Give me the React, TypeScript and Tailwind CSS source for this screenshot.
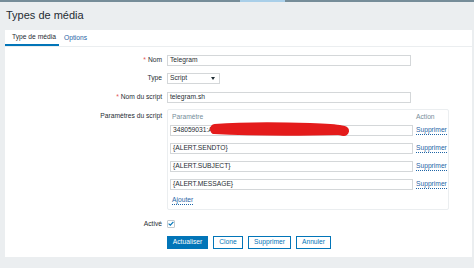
import { useState } from 'react';

const params = ['348059031:A', '{ALERT.SENDTO}', '{ALERT.SUBJECT}', '{ALERT.MESSAGE}'];

const Label = ({ text, required }: { text: string; required?: boolean }) => (
  <div className="flex items-center justify-end whitespace-nowrap">
    {required && <span className="mr-[2px] text-[#e45959]">*</span>}
    {text}
  </div>
);

const TextInput = ({ value, width }: { value: string; width: string }) => (
  <div className={`flex h-[11px] items-center border border-[#d4d7d9] bg-white pl-[2px] ${width}`}>
    {value}
  </div>
);

const Redaction = () => (
  <svg
    className="pointer-events-none absolute left-[40px] top-[-4px]"
    width="140"
    height="20"
    viewBox="0 0 140 20"
  >
    <path
      d="M5 8 C 30 6, 70 6, 100 7 S 128 9, 134 10"
      fill="none"
      stroke="#e41b1b"
      strokeWidth="10"
      strokeLinecap="round"
    />
    <path d="M4 10 C 40 12, 90 12, 132 11" fill="none" stroke="#e41b1b" strokeWidth="6" strokeLinecap="round" />
  </svg>
);

const App = () => {
  const [active, setActive] = useState(true);

  return (
    <div className="h-[268px] w-[474px] overflow-hidden bg-[#ebeef0] font-['Liberation_Sans',Arial,sans-serif] text-[6.7px] text-[#1f2c33]">
      <div className="flex h-[2px] bg-[#768d99]">
        <div className="w-[240px]" />
        <div className="w-[45px] bg-[#a9cfe9]" />
      </div>
      <div className="flex h-[26px] items-center pl-[6px] text-[11px] text-[#1f2c33]">Types de média</div>
      <div className="h-[2px]" />

      <div className="ml-[5px] mr-[2px] h-[227px] bg-white">
        <div className="flex h-[17px] border-b border-[#ebeef0]">
          <div className="flex w-[54px] items-center border-b-2 border-[#0275b8] pl-[7px] pt-[1px]">Type de média</div>
          <div className="ml-[5px] flex items-center pt-[1px] text-[#1f65a6]">Options</div>
        </div>

        <div className="grid grid-cols-[157px_1fr] gap-x-[5px]">
          <div className="col-span-2 h-[8px]" />
          <Label text="Nom" required />
          <TextInput value="Telegram" width="w-[244px]" />
          <div className="col-span-2 h-[7px]" />
          <Label text="Type" />
          <div className="flex h-[11px] w-[53px] items-center justify-between border border-[#d4d7d9] bg-white pl-[2px] pr-[4px]">
            Script
            <svg width="4" height="3" viewBox="0 0 4 3">
              <path d="M0 0 H4 L2 3 Z" fill="#1f2c33" />
            </svg>
          </div>
          <div className="col-span-2 h-[8px]" />
          <Label text="Nom du script" required />
          <TextInput value="telegram.sh" width="w-[244px]" />
          <div className="col-span-2 h-[6px]" />

          <div className="flex h-[13px] items-center justify-end pt-[1px]">Paramètres du script</div>
          <div className="h-[101px] w-[282px] rounded-[2px] border border-[#ebeef0] pl-[2px]">
            <div className="flex h-[12px] items-end text-[#768d99]">
              <div className="w-[246px] pl-[2px]">Paramètre</div>
              <div>Action</div>
            </div>
            <div className="mt-[3px] flex flex-col gap-[7px]">
              {params.map((p, i) => (
                <div key={p} className="flex items-center">
                  <div className="relative">
                    <TextInput value={p} width="w-[243px]" />
                    {i === 0 && <Redaction />}
                  </div>
                  <span className="ml-[3px] border-b border-dotted border-[#1f65a6] leading-[8px] text-[#1f65a6]">
                    Supprimer
                  </span>
                </div>
              ))}
            </div>
            <div className="ml-[2px] mt-[6px] w-fit border-b border-dotted border-[#1f65a6] leading-[8px] text-[#1f65a6]">
              Ajouter
            </div>
          </div>

          <div className="col-span-2 h-[9px]" />
          <Label text="Activé" />
          <div className="flex h-[9px] items-center">
            <button
              type="button"
              onClick={() => setActive(!active)}
              className="flex h-[8px] w-[8px] items-center justify-center rounded-[1px] border border-[#c5cbcf] bg-white"
            >
              {active && (
                <svg width="6" height="5" viewBox="0 0 6 5">
                  <path d="M0.6 2.6 L2.3 4.1 L5.4 0.8" fill="none" stroke="#0275b8" strokeWidth="1.2" />
                </svg>
              )}
            </button>
          </div>
          <div className="col-span-2 h-[7px]" />
          <div />
          <div className="flex gap-[5px]">
            <div className="flex h-[12.5px] w-[41px] items-center justify-center bg-[#0275b8] text-white">Actualiser</div>
            <div className="flex h-[12.5px] w-[30px] items-center justify-center border border-[#0275b8] text-[#0275b8]">Clone</div>
            <div className="flex h-[12.5px] w-[43px] items-center justify-center border border-[#0275b8] text-[#0275b8]">Supprimer</div>
            <div className="flex h-[12.5px] w-[35px] items-center justify-center border border-[#0275b8] text-[#0275b8]">Annuler</div>
          </div>
        </div>
      </div>
    </div>
  );
};

export default App;
